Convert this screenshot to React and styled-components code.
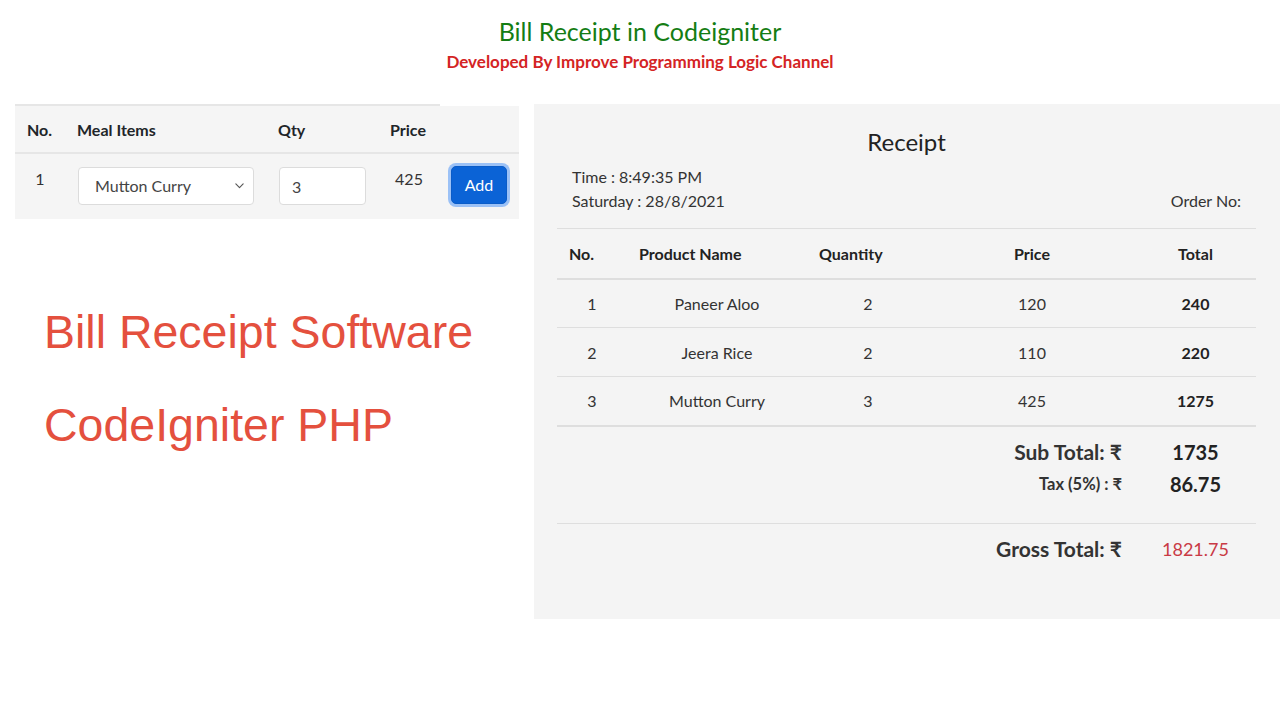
import styled, { createGlobalStyle } from "styled-components";

const GlobalStyle = createGlobalStyle`
  html, body {
    margin: 0;
    padding: 0;
    background: #fff;
  }
  body {
    font-family: Lato, "Noto Sans", "DejaVu Sans", sans-serif;
    color: #212529;
    font-size: 16px;
  }
  * {
    box-sizing: border-box;
  }
`;

const mealRows = [
  { no: 1, name: "Paneer Aloo", qty: 2, price: 120, total: 240 },
  { no: 2, name: "Jeera Rice", qty: 2, price: 110, total: 220 },
  { no: 3, name: "Mutton Curry", qty: 3, price: 425, total: 1275 },
];

function App() {
  return (
    <Page>
      <GlobalStyle />
      <Header>
        <Title>Bill Receipt in Codeigniter</Title>
        <Subtitle>Developed By Improve Programming Logic Channel</Subtitle>
      </Header>
      <Content>
        <LeftColumn>
          <OrderTable>
            <colgroup>
              <col style={{ width: 50 }} />
              <col style={{ width: 201 }} />
              <col style={{ width: 112 }} />
              <col style={{ width: 62 }} />
              <col style={{ width: 79 }} />
            </colgroup>
            <thead>
              <tr>
                <OrderTh>No.</OrderTh>
                <OrderTh>Meal Items</OrderTh>
                <OrderTh>Qty</OrderTh>
                <OrderTh>Price</OrderTh>
                <OrderTh $noTop />
              </tr>
            </thead>
            <tbody>
              <tr>
                <OrderTd $center>1</OrderTd>
                <OrderTd>
                  <SelectWrap>
                    <Select defaultValue="mutton">
                      <option value="paneer">Paneer Aloo</option>
                      <option value="jeera">Jeera Rice</option>
                      <option value="mutton">Mutton Curry</option>
                    </Select>
                    <Chevron viewBox="0 0 16 16">
                      <path
                        d="M3.5 6l4.5 4.5L12.5 6"
                        fill="none"
                        stroke="#555"
                        strokeWidth="1.4"
                        strokeLinecap="round"
                        strokeLinejoin="round"
                      />
                    </Chevron>
                  </SelectWrap>
                </OrderTd>
                <OrderTd>
                  <QtyInput defaultValue="3" />
                </OrderTd>
                <OrderTd $center>425</OrderTd>
                <OrderTd $button>
                  <AddButton>Add</AddButton>
                </OrderTd>
              </tr>
            </tbody>
          </OrderTable>
          <Promo>
            <PromoLine>Bill Receipt Software</PromoLine>
            <PromoLine>CodeIgniter PHP</PromoLine>
          </Promo>
        </LeftColumn>

        <ReceiptPanel>
          <ReceiptTitle>Receipt</ReceiptTitle>
          <MetaRow>
            <div>
              <MetaLine>Time : 8:49:35 PM</MetaLine>
              <MetaLine>Saturday : 28/8/2021</MetaLine>
            </div>
            <MetaLine>Order No:</MetaLine>
          </MetaRow>
          <ReceiptTable>
            <colgroup>
              <col style={{ width: 70 }} />
              <col style={{ width: 180 }} />
              <col style={{ width: 122 }} />
              <col style={{ width: 206 }} />
              <col style={{ width: 121 }} />
            </colgroup>
            <thead>
              <tr>
                <ReceiptTh>No.</ReceiptTh>
                <ReceiptTh>Product Name</ReceiptTh>
                <ReceiptTh>Quantity</ReceiptTh>
                <ReceiptTh $center>Price</ReceiptTh>
                <ReceiptTh $center>Total</ReceiptTh>
              </tr>
            </thead>
            <tbody>
              {mealRows.map((row) => (
                <tr key={row.no}>
                  <ReceiptTd>{row.no}</ReceiptTd>
                  <ReceiptTd>{row.name}</ReceiptTd>
                  <ReceiptTd>{row.qty}</ReceiptTd>
                  <ReceiptTd>{row.price}</ReceiptTd>
                  <ReceiptTd $bold>{row.total}</ReceiptTd>
                </tr>
              ))}
            </tbody>
          </ReceiptTable>

          <Summary>
            <SumLabel>Sub Total: ₹</SumLabel>
            <SumValue>1735</SumValue>
            <SumLabel $small>Tax (5%) : ₹</SumLabel>
            <SumValue>86.75</SumValue>
          </Summary>
          <Divider />
          <Summary>
            <SumLabel>Gross Total: ₹</SumLabel>
            <SumValue $red>1821.75</SumValue>
          </Summary>
        </ReceiptPanel>
      </Content>
    </Page>
  );
}

const Page = styled.div`
  width: 1280px;
  min-height: 720px;
`;

const Header = styled.header`
  text-align: center;
  padding-top: 15px;
  height: 104px;
`;

const Title = styled.h2`
  margin: 0;
  font-size: 25px;
  font-weight: 400;
  line-height: 32px;
  color: #147d14;
`;

const Subtitle = styled.h4`
  margin: 0;
  margin-top: 3px;
  font-size: 17px;
  font-weight: 700;
  line-height: 24px;
  color: #d42424;
`;

const Content = styled.main`
  display: flex;
  align-items: flex-start;
`;

const LeftColumn = styled.section`
  width: 534px;
  padding-left: 15px;
  padding-right: 15px;
`;

const OrderTable = styled.table`
  width: 504px;
  table-layout: fixed;
  border-collapse: collapse;
  background: #f5f5f5;
`;

const OrderTh = styled.th`
  text-align: left;
  padding: 0 12px;
  height: 48px;
  font-weight: 700;
  border-top: 2px solid ${(p) => (p.$noTop ? "#fff" : "#e6e6e6")};
  border-bottom: 2px solid #e6e6e6;
  &:first-child {
    padding-left: 12px;
  }
`;

const OrderTd = styled.td`
  vertical-align: top;
  padding: ${(p) => (p.$button ? "12px 12px 14px 11px" : "13px 12px 14px")};
  line-height: 24px;
  text-align: ${(p) => (p.$center ? "center" : "left")};
  color: #333;
  &:first-child {
    padding-left: 0;
    padding-right: 0;
  }
`;

const SelectWrap = styled.div`
  position: relative;
  width: 176px;
  margin-left: 1px;
`;

const Select = styled.select`
  appearance: none;
  width: 100%;
  height: 38px;
  padding: 0 30px 0 16px;
  font: inherit;
  color: #444;
  background: #fff;
  border: 1px solid #dcdcdc;
  border-radius: 4px;
`;

const Chevron = styled.svg`
  position: absolute;
  right: 8px;
  top: 12px;
  width: 13px;
  height: 13px;
  pointer-events: none;
`;

const QtyInput = styled.input`
  width: 87px;
  height: 38px;
  margin-left: 1px;
  padding: 0 12px;
  font: inherit;
  color: #444;
  background: #fff;
  border: 1px solid #dcdcdc;
  border-radius: 4px;
`;

const AddButton = styled.button`
  width: 56px;
  height: 38px;
  font: inherit;
  color: #fff;
  background: #0b63d6;
  border: 1px solid #0a5cc8;
  border-radius: 5px;
  box-shadow: 0 0 0 3px rgba(80, 150, 245, 0.55);
  cursor: pointer;
`;

const Promo = styled.div`
  padding: 90px 0 0 29px;
`;

const PromoLine = styled.p`
  margin: 0 0 47px;
  font-family: "Liberation Sans", Arial, sans-serif;
  font-size: 46.5px;
  line-height: 46px;
  color: #e4503e;
`;

const ReceiptPanel = styled.section`
  width: 746px;
  height: 515px;
  background: #f4f4f4;
  padding: 24px 24px 0 23px;
`;

const ReceiptTitle = styled.h3`
  margin: 0;
  text-align: center;
  font-size: 24px;
  font-weight: 400;
  line-height: 28px;
  color: #222;
`;

const MetaRow = styled.div`
  display: flex;
  justify-content: space-between;
  align-items: flex-end;
  padding: 9px 15px 15px;
`;

const MetaLine = styled.div`
  line-height: 24px;
  color: #333;
`;

const ReceiptTable = styled.table`
  width: 100%;
  table-layout: fixed;
  border-collapse: collapse;
  border-top: 1px solid #dedede;
`;

const ReceiptTh = styled.th`
  height: 50px;
  padding: 0 12px;
  text-align: ${(p) => (p.$center ? "center" : "left")};
  font-weight: 700;
  color: #222;
  border-bottom: 2px solid #dedede;
`;

const ReceiptTd = styled.td`
  height: 49px;
  padding: 0 12px;
  text-align: center;
  font-weight: ${(p) => (p.$bold ? 700 : 400)};
  color: ${(p) => (p.$bold ? "#222" : "#333")};
  border-bottom: 1px solid #dedede;
  tr:last-child & {
    border-bottom: 2px solid #dedede;
  }
`;

const Summary = styled.div`
  display: grid;
  grid-template-columns: 1fr 121px;
  align-items: center;
  padding-top: 9px;
`;

const SumLabel = styled.div`
  text-align: right;
  padding-right: 13px;
  font-weight: 700;
  font-size: ${(p) => (p.$small ? "16.5px" : "21px")};
  line-height: 32px;
  color: #333;
`;

const SumValue = styled.div`
  text-align: center;
  font-weight: 700;
  font-size: 20px;
  line-height: 32px;
  color: #222;
  ${(p) =>
    p.$red &&
    `
    font-weight: 400;
    font-size: 18px;
    color: #c93a45;
  `}
`;

const Divider = styled.hr`
  margin: 23px 0 0;
  border: 0;
  border-top: 1px solid #dedede;
`;

export default App;
